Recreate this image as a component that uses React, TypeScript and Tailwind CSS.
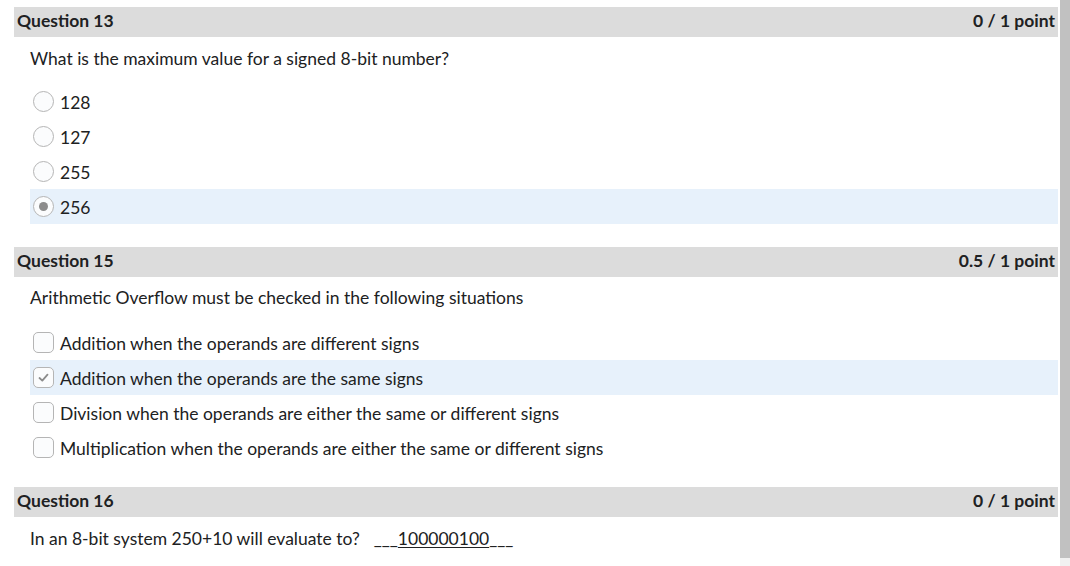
import React from "react";

const font = { fontFamily: "Lato, 'Noto Sans', sans-serif" };

function Header({ title, score }: { title: string; score: string }) {
  return (
    <div className="flex h-[30px] items-center justify-between bg-[#dcdcdc] pl-[3px] pr-[3px] pb-[2px] text-[17.5px] font-bold text-[#202122]">
      <span>{title}</span>
      <span>{score}</span>
    </div>
  );
}

function Radio({ checked }: { checked?: boolean }) {
  return (
    <span className="flex h-[21px] w-[21px] shrink-0 items-center justify-center rounded-full border border-[#b5b5b5] bg-[#fbfcfd]">
      {checked && <span className="h-[9px] w-[9px] rounded-full bg-[#8c8c8c]" />}
    </span>
  );
}

function Check({ checked }: { checked?: boolean }) {
  return (
    <span className="flex h-[21px] w-[21px] shrink-0 items-center justify-center rounded-[5px] border border-[#b5b5b5] bg-[#fbfcfd]">
      {checked && (
        <svg width="13" height="13" viewBox="0 0 13 13" fill="none">
          <path d="M2.5 7 L5.3 9.6 L10.5 3.6" stroke="#8c8c8c" strokeWidth="1.8" strokeLinecap="round" strokeLinejoin="round" />
        </svg>
      )}
    </span>
  );
}

function Option({ label, checked, type }: { label: string; checked?: boolean; type: "radio" | "check" }) {
  return (
    <div className={`flex h-[35px] items-center gap-[6px] pl-[3px] ${checked ? "bg-[#e7f1fb]" : ""}`}>
      {type === "radio" ? <Radio checked={checked} /> : <Check checked={checked} />}
      <span className="pt-[3px] text-[17.5px] text-[#202122]">{label}</span>
    </div>
  );
}

export default function App() {
  return (
    <div className="flex h-[566px] w-[1070px] overflow-hidden bg-white" style={font}>
      <div className="w-[1058px] pl-[14px] pt-[7px]">
        <Header title="Question 13" score="0 / 1 point" />
        <div className="pl-[16px]">
          <div className="mt-[10px] h-[24px] text-[17.5px] leading-[24px] text-[#202122]">
            What is the maximum value for a signed 8-bit number?
          </div>
          <div className="mt-[13px]">
            <Option type="radio" label="128" />
            <Option type="radio" label="127" />
            <Option type="radio" label="255" />
            <Option type="radio" label="256" checked />
          </div>
        </div>

        <div className="mt-[23px]">
          <Header title="Question 15" score="0.5 / 1 point" />
        </div>
        <div className="pl-[16px]">
          <div className="mt-[9px] h-[24px] text-[17.5px] leading-[24px] text-[#202122]">
            Arithmetic Overflow must be checked in the following situations
          </div>
          <div className="mt-[15px]">
            <Option type="check" label="Addition when the operands are different signs" />
            <Option type="check" label="Addition when the operands are the same signs" checked />
            <Option type="check" label="Division when the operands are either the same or different signs" />
            <Option type="check" label="Multiplication when the operands are either the same or different signs" />
          </div>
        </div>

        <div className="mt-[22px]">
          <Header title="Question 16" score="0 / 1 point" />
        </div>
        <div className="pl-[16px]">
          <div className="mt-[10px] flex h-[24px] items-center text-[17.5px] leading-[24px] text-[#202122]">
            <span>In an 8-bit system 250+10 will evaluate to?</span>
            <span className="ml-[14px]">
              ___<span className="underline underline-offset-2">100000100</span>___
            </span>
          </div>
        </div>
      </div>
      <div className="ml-[2px] flex w-[10px] flex-col">
        <div className="h-[558px] bg-[#c1c1c1]" />
        <div className="flex-1 bg-[#f1f1f1]" />
      </div>
    </div>
  );
}
